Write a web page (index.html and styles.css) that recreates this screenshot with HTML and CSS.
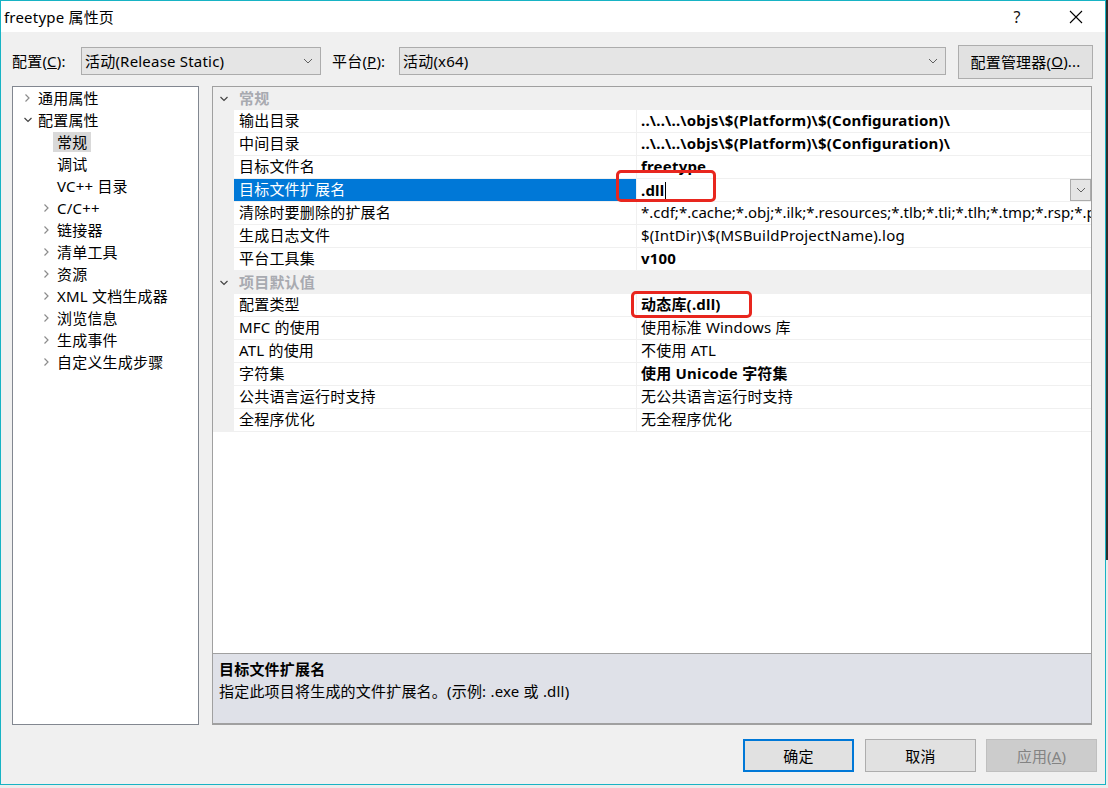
FILE: index.html
```html
<!DOCTYPE html>
<html lang="zh-CN">
<head>
<meta charset="utf-8">
<title>freetype 属性页</title>
<link rel="stylesheet" href="styles.css">
</head>
<body>
<div class="window">
  <div class="titlebar">
    <span class="title">freetype 属性页</span>
    <span class="help">?</span>
    <span class="close"><svg width="14" height="14" viewBox="0 0 14 14"><path d="M1 1 L13 13 M13 1 L1 13" stroke="#000" stroke-width="1.1" fill="none"/></svg></span>
  </div>
  <div class="content">
    <div class="toolbar">
      <span class="lbl lbl-config">配置(<u>C</u>):</span>
      <div class="combo combo-config"><span class="combo-text">活动(Release Static)</span><svg class="chev" width="10" height="6" viewBox="0 0 10 6"><path d="M1 1 L5 5 L9 1" stroke="#606060" stroke-width="1" fill="none"/></svg></div>
      <span class="lbl lbl-plat">平台(<u>P</u>):</span>
      <div class="combo combo-plat"><span class="combo-text">活动(x64)</span><svg class="chev" width="10" height="6" viewBox="0 0 10 6"><path d="M1 1 L5 5 L9 1" stroke="#606060" stroke-width="1" fill="none"/></svg></div>
      <div class="btn btn-mgr">配置管理器(<u>O</u>)...</div>
    </div>
    <div class="main">
      <div class="tree">
        <div class="ti l0"><span class="tw"><svg width="8" height="10" viewBox="0 0 8 10"><path d="M2.5 1.5 L6 5 L2.5 8.5" stroke="#8c8c8c" stroke-width="1.2" fill="none"/></svg></span><span class="tl">通用属性</span></div>
        <div class="ti l0"><span class="tw"><svg width="10" height="8" viewBox="0 0 10 8"><path d="M1.5 2 L5 5.5 L8.5 2" stroke="#444" stroke-width="1.2" fill="none"/></svg></span><span class="tl">配置属性</span></div>
        <div class="ti l1"><span class="tw"></span><span class="tl sel">常规</span></div>
        <div class="ti l1"><span class="tw"></span><span class="tl">调试</span></div>
        <div class="ti l1"><span class="tw"></span><span class="tl">VC++ 目录</span></div>
        <div class="ti l1"><span class="tw"><svg width="8" height="10" viewBox="0 0 8 10"><path d="M2.5 1.5 L6 5 L2.5 8.5" stroke="#8c8c8c" stroke-width="1.2" fill="none"/></svg></span><span class="tl">C/C++</span></div>
        <div class="ti l1"><span class="tw"><svg width="8" height="10" viewBox="0 0 8 10"><path d="M2.5 1.5 L6 5 L2.5 8.5" stroke="#8c8c8c" stroke-width="1.2" fill="none"/></svg></span><span class="tl">链接器</span></div>
        <div class="ti l1"><span class="tw"><svg width="8" height="10" viewBox="0 0 8 10"><path d="M2.5 1.5 L6 5 L2.5 8.5" stroke="#8c8c8c" stroke-width="1.2" fill="none"/></svg></span><span class="tl">清单工具</span></div>
        <div class="ti l1"><span class="tw"><svg width="8" height="10" viewBox="0 0 8 10"><path d="M2.5 1.5 L6 5 L2.5 8.5" stroke="#8c8c8c" stroke-width="1.2" fill="none"/></svg></span><span class="tl">资源</span></div>
        <div class="ti l1"><span class="tw"><svg width="8" height="10" viewBox="0 0 8 10"><path d="M2.5 1.5 L6 5 L2.5 8.5" stroke="#8c8c8c" stroke-width="1.2" fill="none"/></svg></span><span class="tl">XML 文档生成器</span></div>
        <div class="ti l1"><span class="tw"><svg width="8" height="10" viewBox="0 0 8 10"><path d="M2.5 1.5 L6 5 L2.5 8.5" stroke="#8c8c8c" stroke-width="1.2" fill="none"/></svg></span><span class="tl">浏览信息</span></div>
        <div class="ti l1"><span class="tw"><svg width="8" height="10" viewBox="0 0 8 10"><path d="M2.5 1.5 L6 5 L2.5 8.5" stroke="#8c8c8c" stroke-width="1.2" fill="none"/></svg></span><span class="tl">生成事件</span></div>
        <div class="ti l1"><span class="tw"><svg width="8" height="10" viewBox="0 0 8 10"><path d="M2.5 1.5 L6 5 L2.5 8.5" stroke="#8c8c8c" stroke-width="1.2" fill="none"/></svg></span><span class="tl">自定义生成步骤</span></div>
      </div>
      <div class="right">
        <div class="grid">
          <div class="cat"><span class="gut"><svg width="10" height="8" viewBox="0 0 10 8"><path d="M1.5 2 L5 5.5 L8.5 2" stroke="#444" stroke-width="1.2" fill="none"/></svg></span><span class="cat-name">常规</span></div>
          <div class="row"><span class="gut"></span><span class="name">输出目录</span><span class="val b">..\..\..\objs\$(Platform)\$(Configuration)\</span></div>
          <div class="row"><span class="gut"></span><span class="name">中间目录</span><span class="val b">..\..\..\objs\$(Platform)\$(Configuration)\</span></div>
          <div class="row"><span class="gut"></span><span class="name">目标文件名</span><span class="val b">freetype</span></div>
          <div class="row selrow"><span class="gut"></span><span class="name">目标文件扩展名</span><span class="val b edit"><span class="edit-text">.dll</span><span class="caret"></span><span class="ddbtn"><svg width="10" height="6" viewBox="0 0 10 6"><path d="M1 1 L5 5 L9 1" stroke="#606060" stroke-width="1" fill="none"/></svg></span></span></div>
          <div class="row"><span class="gut"></span><span class="name">清除时要删除的扩展名</span><span class="val tight">*.cdf;*.cache;*.obj;*.ilk;*.resources;*.tlb;*.tli;*.tlh;*.tmp;*.rsp;*.p</span></div>
          <div class="row"><span class="gut"></span><span class="name">生成日志文件</span><span class="val">$(IntDir)\$(MSBuildProjectName).log</span></div>
          <div class="row"><span class="gut"></span><span class="name">平台工具集</span><span class="val b">v100</span></div>
          <div class="cat"><span class="gut"><svg width="10" height="8" viewBox="0 0 10 8"><path d="M1.5 2 L5 5.5 L8.5 2" stroke="#444" stroke-width="1.2" fill="none"/></svg></span><span class="cat-name">项目默认值</span></div>
          <div class="row"><span class="gut"></span><span class="name">配置类型</span><span class="val b">动态库(.dll)</span></div>
          <div class="row"><span class="gut"></span><span class="name">MFC 的使用</span><span class="val">使用标准 Windows 库</span></div>
          <div class="row"><span class="gut"></span><span class="name">ATL 的使用</span><span class="val">不使用 ATL</span></div>
          <div class="row"><span class="gut"></span><span class="name">字符集</span><span class="val b">使用 Unicode 字符集</span></div>
          <div class="row"><span class="gut"></span><span class="name">公共语言运行时支持</span><span class="val">无公共语言运行时支持</span></div>
          <div class="row"><span class="gut"></span><span class="name">全程序优化</span><span class="val">无全程序优化</span></div>
        </div>
        <div class="desc">
          <div class="desc-title">目标文件扩展名</div>
          <div class="desc-text">指定此项目将生成的文件扩展名。(示例: .exe 或 .dll)</div>
        </div>
      </div>
    </div>
    <div class="buttons">
      <div class="btn dlg ok">确定</div>
      <div class="btn dlg">取消</div>
      <div class="btn dlg disabled">应用(<u>A</u>)</div>
    </div>
  </div>
</div>
<div class="annot annot-1"></div>
<div class="annot annot-2"></div>
</body>
</html>
```

FILE: styles.css
```css
* { box-sizing: border-box; }
html, body {
  margin: 0;
  padding: 0;
  width: 1108px;
  height: 788px;
  overflow: hidden;
}
body {
  position: relative;
  background: linear-gradient(#2e2e2e, #2e2e2e) no-repeat right top / 2px 560px, #ececec;
  font-family: "Noto Sans", "Noto Sans CJK SC", sans-serif;
  font-size: 15px;
  letter-spacing: 0.2px;
  color: #000;
}
.window {
  width: 1106px;
  height: 785px;
  border: 1px solid #17b3c4;
  background: #f0f0f0;
  display: flex;
  flex-direction: column;
}
.titlebar {
  height: 31px;
  background: #fff;
  display: flex;
  align-items: center;
  padding-left: 3px;
  flex: none;
}
.title { flex: 1; line-height: 20px; }
.help {
  width: 20px;
  text-align: center;
  font-size: 16px;
  color: #111;
  margin-right: 42px;
}
.close { width: 14px; height: 14px; margin-right: 22px; display: flex; }
.content {
  flex: 1;
  display: flex;
  flex-direction: column;
  padding: 13px 8px 0 11px;
}
.toolbar {
  display: flex;
  align-items: flex-start;
  height: 34px;
  flex: none;
}
.lbl { line-height: 32px; white-space: nowrap; }
.lbl-config { width: 69px; }
.lbl-plat { width: 67px; margin-left: 11px; }
.combo {
  margin-top: 2px;
  height: 28px;
  background: #e5e5e5;
  border: 1px solid #acacac;
  display: flex;
  align-items: center;
  padding: 0 7px 0 3px;
}
.combo-text { flex: 1; white-space: nowrap; line-height: 24px; }
.combo-config { width: 240px; }
.combo-plat { width: 547px; }
.btn {
  background: #e1e1e1;
  border: 1px solid #adadad;
  display: flex;
  align-items: center;
  justify-content: center;
  white-space: nowrap;
}
.btn-mgr { width: 135px; height: 34px; margin-left: 12px; padding-bottom: 2px; }
.main {
  display: flex;
  margin-top: 7px;
  height: 639px;
  flex: none;
}
.tree {
  width: 187px;
  height: 639px;
  background: #fff;
  border: 1px solid #828790;
}
.ti {
  height: 22px;
  display: flex;
  align-items: center;
  white-space: nowrap;
}
.ti.l0 { padding-left: 9px; }
.ti.l1 { padding-left: 28px; }
.tw {
  width: 16px;
  height: 22px;
  display: flex;
  align-items: center;
  padding-left: 1px;
}
.tl { line-height: 20px; }
.tl.sel {
  background: #d9d9d9;
  padding: 0 4px;
  margin-left: -4px;
}
.right {
  margin-left: 13px;
  width: 880px;
  display: flex;
  flex-direction: column;
}
.grid {
  height: 568px;
  background: #fff;
  border: 1px solid #a0a0a0;
  overflow: hidden;
}
.cat, .row {
  display: flex;
  height: 23px;
  white-space: nowrap;
}
.cat { background: #f0f0f0; }
.cat .gut {
  width: 21px;
  display: flex;
  align-items: center;
  justify-content: center;
  padding-left: 1px;
}
.cat-name {
  line-height: 22px;
  padding-left: 5px;
  font-weight: bold;
  color: #a8aab0;
}
.row { border-bottom: 1px solid #f0f0f0; }
.row .gut { width: 21px; background: #f0f0f0; flex: none; }
.name {
  width: 403px;
  flex: none;
  padding-left: 5px;
  line-height: 21px;
  border-right: 1px solid #f0f0f0;
  overflow: hidden;
}
.val {
  flex: 1;
  min-width: 0;
  padding-left: 4px;
  line-height: 21px;
  overflow: hidden;
}
.val.tight { letter-spacing: 0; }
.b { font-weight: bold; }
.selrow .name { background: #0078d7; color: #fff; }
.edit { display: flex; align-items: center; padding-right: 0; }
.caret {
  width: 1px;
  height: 17px;
  background: #000;
  margin-left: 1px;
}
.ddbtn {
  margin-left: auto;
  width: 21px;
  height: 22px;
  background: #e5e5e5;
  border: 1px solid #acacac;
  display: flex;
  align-items: center;
  justify-content: center;
}
.desc {
  height: 71px;
  background: #dfe1e8;
  border-left: 1px solid #a0a0a0;
  border-right: 1px solid #a0a0a0;
  border-bottom: 2px solid #a0a0a0;
  padding: 4px 6px;
}
.desc-title { font-weight: bold; line-height: 22px; }
.desc-text { line-height: 22px; }
.buttons {
  display: flex;
  justify-content: flex-end;
  margin-top: 14px;
  gap: 10px;
}
.dlg { width: 111px; height: 33px; }
.dlg.ok { border: 2px solid #0078d7; margin-right: 1px; }
.dlg.disabled { background: #cccccc; border-color: #bfbfbf; color: #838383; }
.annot {
  position: absolute;
  border: 3px solid #e8261e;
  border-radius: 5px;
}
.annot-1 { left: 616px; top: 170px; width: 100px; height: 32px; }
.annot-2 { left: 631px; top: 291px; width: 121px; height: 27px; }
```
